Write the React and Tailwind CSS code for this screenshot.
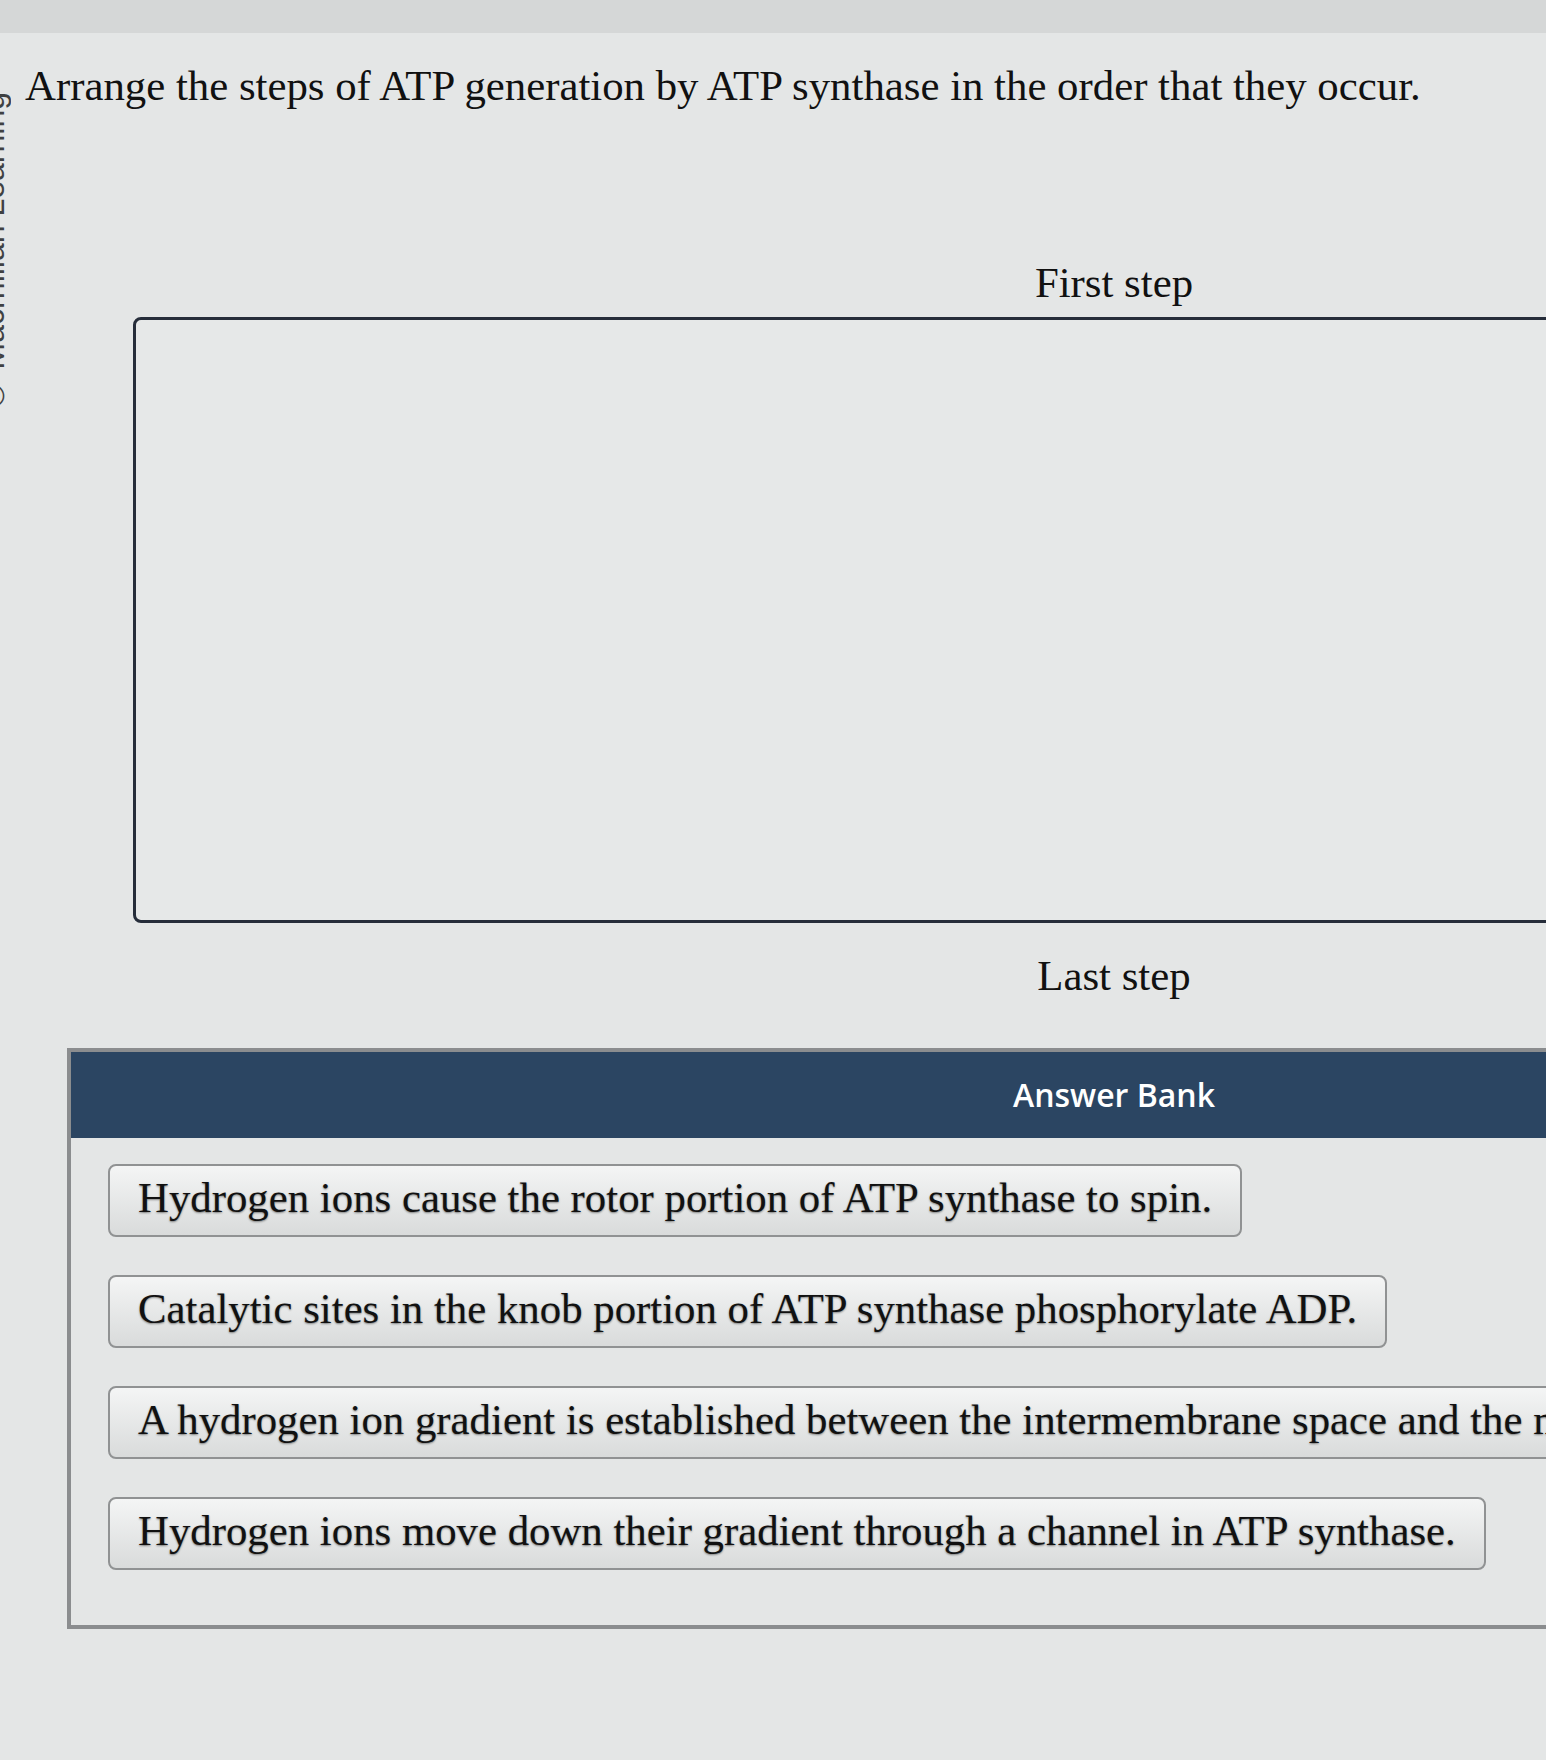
const answers = [
  "Hydrogen ions cause the rotor portion of ATP synthase to spin.",
  "Catalytic sites in the knob portion of ATP synthase phosphorylate ADP.",
  "A hydrogen ion gradient is established between the intermembrane space and the mitochondrial matrix.",
  "Hydrogen ions move down their gradient through a channel in ATP synthase.",
];

const AnswerCard = ({ text }) => (
  <div className="h-[73px] flex items-center pb-[5px] px-[28px] rounded-lg border-2 border-[#909293] bg-gradient-to-b from-[#f4f5f5] to-[#d9dbdb] whitespace-nowrap text-[42.8px] leading-[48px] [text-shadow:0_1px_2px_rgba(0,0,0,0.45)]">
    {text}
  </div>
);

export default function App() {
  return (
    <div className="relative w-[1546px] h-[1760px] overflow-hidden bg-[#e4e6e6] text-[#111] font-['Liberation_Serif',serif]">
      <div className="h-[33px] bg-[#d5d7d7]" />

      {/* sideways copyright line along the left edge */}
      <span className="absolute left-[-23px] top-[92px] [writing-mode:vertical-rl] rotate-180 whitespace-nowrap font-['Liberation_Sans',sans-serif] text-[32px] leading-none text-[#3f4142]">
        © Macmillan Learning
      </span>

      <h1 className="mt-[29px] ml-[25px] text-[42.8px] leading-[48px] font-normal whitespace-nowrap">
        Arrange the steps of ATP generation by ATP synthase in the order that they occur.
      </h1>

      <div className="ml-[67px] w-[2094px] flex flex-col">
        <p className="mt-[149px] text-center text-[42.8px] leading-[48px]">First step</p>
        <div className="mt-[10px] mx-[66px] h-[606px] rounded-lg border-[3px] border-[#262d3a] bg-[#e6e8e8]" />
        <p className="mt-[29px] text-center text-[42.8px] leading-[48px]">Last step</p>

        <section className="mt-[48px] border-4 border-[#8b8d8f]">
          <div className="h-[86px] flex items-center justify-center bg-[#2b4562] text-white font-['Open_Sans',sans-serif] text-[32px] font-semibold">
            Answer Bank
          </div>
          <div className="pt-[26px] pb-[55px] pl-[37px] flex flex-col items-start gap-[38px]">
            {answers.map((a) => (
              <AnswerCard key={a} text={a} />
            ))}
          </div>
        </section>
      </div>
    </div>
  );
}
